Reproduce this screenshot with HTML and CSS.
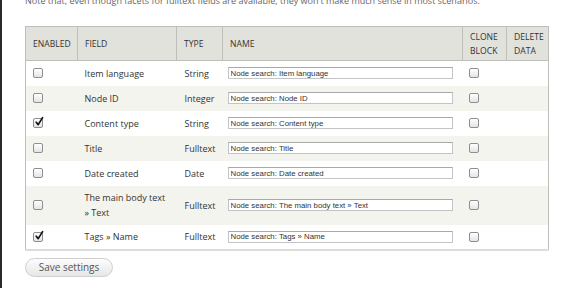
FILE: index.html
```html
<!DOCTYPE html>
<html>
<head>
<meta charset="utf-8">
<link rel="stylesheet" href="styles.css">
</head>
<body>
<div class="page">
  <p class="note">Note that, even though facets for fulltext fields are available, they won't make much sense in most scenarios.</p>
  <table class="facets">
    <colgroup>
      <col class="c-enabled"><col class="c-field"><col class="c-type"><col class="c-name"><col class="c-clone"><col class="c-delete">
    </colgroup>
    <thead>
      <tr>
        <th>Enabled</th>
        <th>Field</th>
        <th>Type</th>
        <th>Name</th>
        <th>Clone<br>block</th>
        <th>Delete<br>data</th>
      </tr>
    </thead>
    <tbody>
      <tr class="odd">
        <td><span class="cb"></span></td>
        <td>Item language</td>
        <td>String</td>
        <td><input class="txt" type="text" value="Node search: Item language"></td>
        <td><span class="cb"></span></td>
        <td></td>
      </tr>
      <tr class="even">
        <td><span class="cb"></span></td>
        <td>Node ID</td>
        <td>Integer</td>
        <td><input class="txt" type="text" value="Node search: Node ID"></td>
        <td><span class="cb"></span></td>
        <td></td>
      </tr>
      <tr class="odd">
        <td><span class="cb checked"><svg viewBox="0 0 10 10"><path d="M2.2 5.2 L4.2 7.6 L8.6 0.6" /></svg></span></td>
        <td>Content type</td>
        <td>String</td>
        <td><input class="txt" type="text" value="Node search: Content type"></td>
        <td><span class="cb"></span></td>
        <td></td>
      </tr>
      <tr class="even">
        <td><span class="cb"></span></td>
        <td>Title</td>
        <td>Fulltext</td>
        <td><input class="txt" type="text" value="Node search: Title"></td>
        <td><span class="cb"></span></td>
        <td></td>
      </tr>
      <tr class="odd">
        <td><span class="cb"></span></td>
        <td>Date created</td>
        <td>Date</td>
        <td><input class="txt" type="text" value="Node search: Date created"></td>
        <td><span class="cb"></span></td>
        <td></td>
      </tr>
      <tr class="even tall">
        <td><span class="cb"></span></td>
        <td>The main body text » Text</td>
        <td>Fulltext</td>
        <td><input class="txt" type="text" value="Node search: The main body text » Text"></td>
        <td><span class="cb"></span></td>
        <td></td>
      </tr>
      <tr class="odd">
        <td><span class="cb checked"><svg viewBox="0 0 10 10"><path d="M2.2 5.2 L4.2 7.6 L8.6 0.6" /></svg></span></td>
        <td>Tags » Name</td>
        <td>Fulltext</td>
        <td><input class="txt" type="text" value="Node search: Tags » Name"></td>
        <td><span class="cb"></span></td>
        <td></td>
      </tr>
    </tbody>
  </table>
  <button class="save" type="button">Save settings</button>
</div>
</body>
</html>
```
FILE: styles.css
```css
html, body {
  margin: 0;
  padding: 0;
  background: #fff;
}
body {
  border-left: 2px solid #2a2a2e;
  height: 288px;
  box-sizing: border-box;
  overflow: hidden;
  font-family: "Open Sans", "Noto Sans", sans-serif;
  font-size: 9px;
  color: #333;
}
.page {
  padding-left: 23px;
}
.note {
  margin: -6px 0 0;
  line-height: 13px;
  color: #666;
  white-space: nowrap;
}
.facets {
  margin-top: 19px;
  border-collapse: collapse;
  table-layout: fixed;
  width: 523px;
  border: 1px solid #bebfb9;
  border-bottom: 2px solid #dcdcd8;
}
.c-enabled { width: 52px; }
.c-field { width: 99px; }
.c-type { width: 46px; }
.c-name { width: 240px; }
.c-clone { width: 44px; }
.c-delete { width: 42px; }
.facets th {
  background: #e1e2dc;
  font-weight: normal;
  text-transform: uppercase;
  text-align: left;
  line-height: 14px;
  height: 34px;
  padding: 0 6px 0 7px;
  box-sizing: border-box;
  border: 0;
  border-left: 1px solid #bebfb9;
  border-bottom: 1px solid #bebfb9;
  color: #333;
  font-size: 8.6px;
}
.facets th:first-child { border-left: 0; }
.facets td {
  height: 25px;
  padding: 0 6px 0 7px;
  box-sizing: border-box;
  line-height: 15px;
  vertical-align: middle;
  border: 0;
}
.facets td:nth-child(3) { padding-left: 8px; }
.facets td:nth-child(4) { padding-left: 5px; }
.facets td:nth-child(5) { padding-left: 6px; }
.facets tr.tall td { height: 39px; }
.facets tr.odd td { background: #fff; }
.facets tr.even td { background: #f3f4ee; }
.cb {
  display: block;
  position: relative;
  width: 8px;
  height: 8px;
  border: 1px solid #8e8e8e;
  border-radius: 2px;
  background: linear-gradient(#ffffff, #e4e4e4);
  box-sizing: content-box;
}
.cb svg {
  position: absolute;
  left: 0;
  top: -2px;
  width: 10px;
  height: 10px;
  overflow: visible;
}
.cb svg path {
  fill: none;
  stroke: #111;
  stroke-width: 1.7;
  stroke-linecap: round;
  stroke-linejoin: round;
}
.txt {
  display: block;
  width: 225px;
  height: 12px;
  margin: 0;
  padding: 0 2px;
  box-sizing: border-box;
  border: 1px solid #c4c4c4;
  border-top-color: #a9a9a9;
  background: #fff;
  font-family: "Liberation Sans", Arial, sans-serif;
  font-size: 7.8px;
  color: #333;
  outline: none;
}
.save {
  display: block;
  margin-top: 7px;
  width: 88px;
  height: 19px;
  padding: 0;
  border: 1px solid #cfcfcf;
  border-radius: 10px;
  background: linear-gradient(#fdfdfd, #e6e6e6);
  font-family: "Open Sans", "Noto Sans", sans-serif;
  font-size: 10px;
  color: #555;
  text-align: center;
}
```
